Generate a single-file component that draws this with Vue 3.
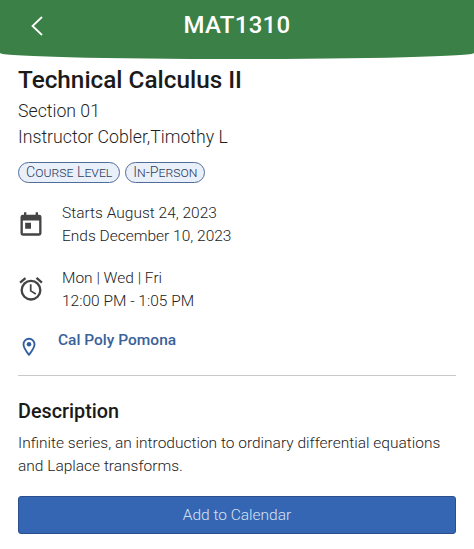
<script setup>
const description = 'Infinite series, an introduction to ordinary differential equations and Laplace transforms.'
</script>

<template>
  <div class="page">
    <header class="bar">
      <svg class="back" viewBox="0 0 14 22" width="14" height="22"><path d="M12 2 L2.500 11 L12 20" fill="none" stroke="#fff" stroke-width="1.800"/></svg>
      <span class="code">MAT1310</span>
    </header>
    <main class="body">
      <h1 class="title">Technical Calculus II</h1>
      <p class="line first">Section 01</p>
      <p class="line second">Instructor Cobler,Timothy L</p>
      <div class="tags">
        <span class="tag">Course Level</span>
        <span class="tag">In-Person</span>
      </div>
      <div class="row dates">
        <svg class="icon" viewBox="0 0 24 24" width="28" height="28"><path fill="#444" d="M19 4h-1V2h-2v2H8V2H6v2H5a2 2 0 0 0-2 2v14a2 2 0 0 0 2 2h14a2 2 0 0 0 2-2V6a2 2 0 0 0-2-2zm0 16H5V9h14v11zM7 11h5v5H7z"/></svg>
        <div class="text"><div>Starts August 24, 2023</div><div>Ends December 10, 2023</div></div>
      </div>
      <div class="row times">
        <svg class="icon" viewBox="0 0 24 24" width="28" height="28"><path fill="#444" d="M22 5.700l-4.600-3.900-1.300 1.500 4.600 3.900L22 5.700zM7.900 3.400L6.600 1.900 2 5.700l1.300 1.500 4.600-3.800zM12.500 8H11v6l4.700 2.900.8-1.200-4-2.400V8zM12 4a9 9 0 1 0 0 18 9 9 0 0 0 0-18zm0 16a7 7 0 1 1 0-14 7 7 0 0 1 0 14z"/></svg>
        <div class="text"><div>Mon | Wed | Fri</div><div>12:00 PM - 1:05 PM</div></div>
      </div>
      <div class="row place">
        <svg class="pin" viewBox="0 0 24 24" width="22" height="22"><path fill="#2f5f9f" d="M12 2a7 7 0 0 0-7 7c0 5.200 7 13 7 13s7-7.800 7-13a7 7 0 0 0-7-7zM7 9a5 5 0 0 1 10 0c0 2.900-2.900 7.200-5 9.900C9.900 16.200 7 11.900 7 9z"/><circle cx="12" cy="9" r="2.500" fill="#2f5f9f"/></svg>
        <span class="link">Cal Poly Pomona</span>
      </div>
      <hr class="rule" />
      <h2 class="heading">Description</h2>
      <p class="desc">{{ description }}</p>
      <button class="cta">Add to Calendar</button>
    </main>
  </div>
</template>

<style scoped>
.page { width: 474px; height: 549px; overflow: hidden; background: #fff; font-family: Roboto, "Liberation Sans", sans-serif; color: #222; position: relative; }
.bar { height: 59px; background: #3b8046; border-radius: 0 0 237px 237px / 0 0 6px 6px; display: flex; align-items: center; justify-content: center; position: relative; padding-bottom: 10px; box-sizing: border-box; }
.back { position: absolute; left: 30px; top: 15px; }
.code { color: #fff; font-size: 24px; font-weight: 500; letter-spacing: .3px; }
.body { padding: 6px 18px 0; }
.title { margin: 0; font-size: 24.300px; font-weight: 500; line-height: 30px; color: #1a1a1a; }
.line { margin: 0; font-size: 17.700px; font-weight: 300; line-height: 27px; color: #1f1f1f; }
.first { margin-top: 3px; }
.second { margin-top: -1px; }
.tags { display: flex; gap: 5px; margin-top: 11px; }
.tag { font-variant: small-caps; font-size: 14.200px; font-weight: 300; line-height: 19px; padding: 0 7px; border: 1px solid #4f6d98; border-radius: 11px; background: #eaf0fa; color: #2f4163; }
.row { display: flex; align-items: center; }
.dates { margin-top: 19px; }
.times { margin-top: 19px; }
.place { margin-top: 16px; }
.icon { margin-left: -1px; margin-top: -2px; flex: none; }
.pin { margin-left: 0; flex: none; position: relative; top: 7px; }
.text { margin-left: 17px; font-size: 15.500px; font-weight: 300; line-height: 23px; color: #222; }
.link { margin-left: 18px; font-size: 15.500px; font-weight: 500; color: #3a6199; }
.rule { margin: 24px 0 0; border: 0; border-top: 1px solid #c8c8c8; }
.heading { margin: 23px 0 0; font-size: 19.800px; font-weight: 500; line-height: 26px; color: #1a1a1a; }
.desc { margin: 7px 0 0; font-size: 15.500px; font-weight: 300; line-height: 22.500px; color: #222; }
.cta { display: block; width: 100%; height: 38px; margin-top: 18.500px; background: #3566b3; border: 1px solid #2a4f8c; border-radius: 3px; color: #d5e2f5; font: 300 15.500px Roboto, sans-serif; }
</style>
